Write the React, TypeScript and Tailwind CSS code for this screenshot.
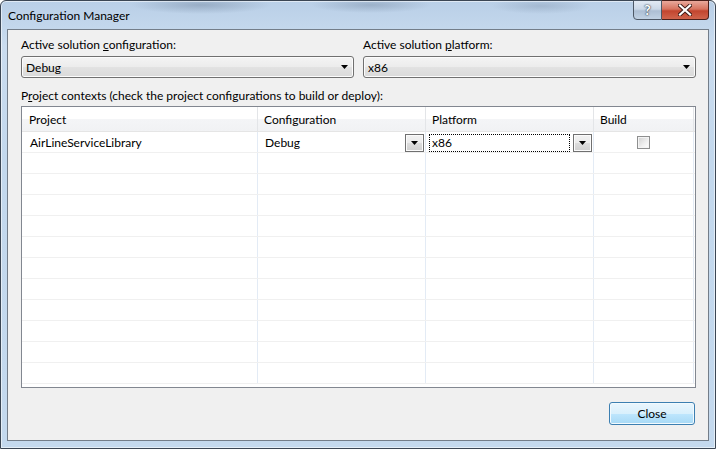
import React from 'react'

function Arrow() {
  return (
    <svg width="7" height="4" viewBox="0 0 7 4" className="shrink-0">
      <path d="M0 0h7L3.5 4z" fill="#000" />
    </svg>
  )
}

function Combo({ value }: { value: string }) {
  return (
    <div className="h-[22px] flex items-center rounded-[3px] border border-[#707070] bg-[linear-gradient(to_bottom,#f4f4f4_0%,#ececec_50%,#e2e2e2_51%,#dadada_100%)] pl-[4px] pr-[5px] shadow-[inset_0_0_0_1px_#fcfcfc]">
      <span className="flex-1 pt-px">{value}</span>
      <Arrow />
    </div>
  )
}

function DropButton() {
  return (
    <div className="w-[19px] h-[18px] flex items-center justify-center border border-[#707070] bg-[linear-gradient(to_bottom,#f2f2f2_0%,#ebebeb_50%,#dddddd_51%,#cfcfcf_100%)] shadow-[inset_0_0_0_1px_#fbfbfb]">
      <Arrow />
    </div>
  )
}

export default function App() {
  const emptyRows = Array.from({ length: 11 })

  return (
    <div className="w-[716px] h-[449px] bg-white font-['Lato',sans-serif] text-[12px] leading-[16px] text-black">
      <div className="w-full h-full flex flex-col rounded-t-[6px] border border-[#3b4654] bg-[radial-gradient(ellipse_70px_9px_at_200px_4px,rgba(110,130,155,0.45),transparent),radial-gradient(ellipse_60px_8px_at_370px_4px,rgba(110,130,155,0.4),transparent),radial-gradient(ellipse_50px_8px_at_540px_5px,rgba(110,130,155,0.3),transparent),linear-gradient(to_bottom,#b9cfe7_0%,#cadcef_10%,#c3d8ed_35%,#c4d9ee_100%)] shadow-[inset_0_0_0_1px_rgba(255,255,255,0.55)]">
        {/* Title bar */}
        <div className="h-[28px] flex items-start pl-[7px] pr-[6px]">
          <span className="self-center pt-px">Configuration Manager</span>
          <div className="ml-auto -mt-px flex">
            <div className="w-[29px] h-[20px] flex items-center justify-center rounded-bl-[4px] border border-[#4d5866] bg-[linear-gradient(to_bottom,#e2eaf4_0%,#cbd8e7_45%,#adbfd4_55%,#c1d2e4_100%)]">
              <span className="text-white font-bold text-[14px] leading-none [text-shadow:0_0_1px_#2a3340,0_0_2px_#2a3340]">?</span>
            </div>
            <div className="w-[47px] h-[20px] flex items-center justify-center rounded-br-[4px] border border-l-0 border-[#4a1f1a] bg-[linear-gradient(to_bottom,#e9a99c_0%,#d7735f_45%,#c2452f_55%,#d0644c_100%)]">
              <svg width="14" height="12" viewBox="0 0 14 12">
                <path d="M2 1.5l10 9M12 1.5l-10 9" stroke="#3b1a16" strokeWidth="4" strokeLinecap="square" />
                <path d="M2 1.5l10 9M12 1.5l-10 9" stroke="#fff" strokeWidth="2.2" strokeLinecap="square" />
              </svg>
            </div>
          </div>
        </div>

        {/* Client area */}
        <div className="mx-[6px] mb-[7px] flex-1 flex flex-col border border-[#737d89] bg-[#f0f0f0] pt-[7px] pl-[13px] pr-[12px] pb-[15px]">
          <div className="grid grid-cols-2 gap-x-[9px]">
            <div className="flex flex-col gap-[3px]">
              <span>Active solution <span className="underline">c</span>onfiguration:</span>
              <Combo value="Debug" />
            </div>
            <div className="flex flex-col gap-[3px]">
              <span>Active solution <span className="underline">p</span>latform:</span>
              <Combo value="x86" />
            </div>
          </div>

          <span className="mt-[10px]">P<span className="underline">r</span>oject contexts (check the project configurations to build or deploy):</span>

          {/* Project grid */}
          <div className="mt-[2px] h-[282px] border border-[#828790] bg-white overflow-hidden">
            <div className="h-[25px] grid grid-cols-[236px_168px_168px_100px_1fr] border-b border-[#e5e5e5] bg-[linear-gradient(to_bottom,#ffffff_0%,#ffffff_50%,#f4f5f7_51%,#f1f2f4_100%)]">
              <div className="flex items-center pt-px pl-[7px] border-r border-[#e3e5e8]">Project</div>
              <div className="flex items-center pt-px pl-[6px] border-r border-[#e3e5e8]">Configuration</div>
              <div className="flex items-center pt-px pl-[6px] border-r border-[#e3e5e8]">Platform</div>
              <div className="flex items-center pt-px pl-[6px] border-r border-[#e3e5e8]">Build</div>
              <div />
            </div>

            <div className="h-[21px] grid grid-cols-[236px_168px_168px_100px_1fr] border-b border-[#f0f0f0]">
              <div className="flex items-center pt-[2px] pl-[8px] border-r border-[#e3ebf5]">AirLineServiceLibrary</div>
              <div className="flex items-center pt-px pl-[7px] pr-px border-r border-[#e3ebf5]">
                <span className="flex-1 pt-px">Debug</span>
                <DropButton />
              </div>
              <div className="flex items-center pt-px pl-[3px] pr-px gap-[3px] border-r border-[#e3ebf5]">
                <div className="flex-1 h-[18px] flex items-center pt-px pl-[2px] border border-dotted border-black">x86</div>
                <DropButton />
              </div>
              <div className="flex items-center justify-center pt-px border-r border-[#e3ebf5]">
                <div className="w-[13px] h-[13px] border border-[#8e8f8f] bg-[linear-gradient(135deg,#cfcfcf_0%,#f0f0f0_60%,#ffffff_100%)] shadow-[inset_0_0_0_1px_#f4f4f4]" />
              </div>
              <div />
            </div>

            {emptyRows.map((_, i) => (
              <div key={i} className="h-[21px] grid grid-cols-[236px_168px_168px_100px_1fr] border-b border-[#f0f0f0]">
                <div className="border-r border-[#e3ebf5]" />
                <div className="border-r border-[#e3ebf5]" />
                <div className="border-r border-[#e3ebf5]" />
                <div className="border-r border-[#e3ebf5]" />
                <div />
              </div>
            ))}
          </div>

          <button className="mt-[14px] self-end mr-px w-[86px] h-[23px] rounded-[3px] border border-[#3c7fb1] bg-[linear-gradient(to_bottom,#eaf6fd_0%,#d9f0fc_50%,#bee6fd_51%,#a7d9f5_100%)] shadow-[inset_0_0_0_1px_#f2fafe]">
            Close
          </button>
        </div>
      </div>
    </div>
  )
}
